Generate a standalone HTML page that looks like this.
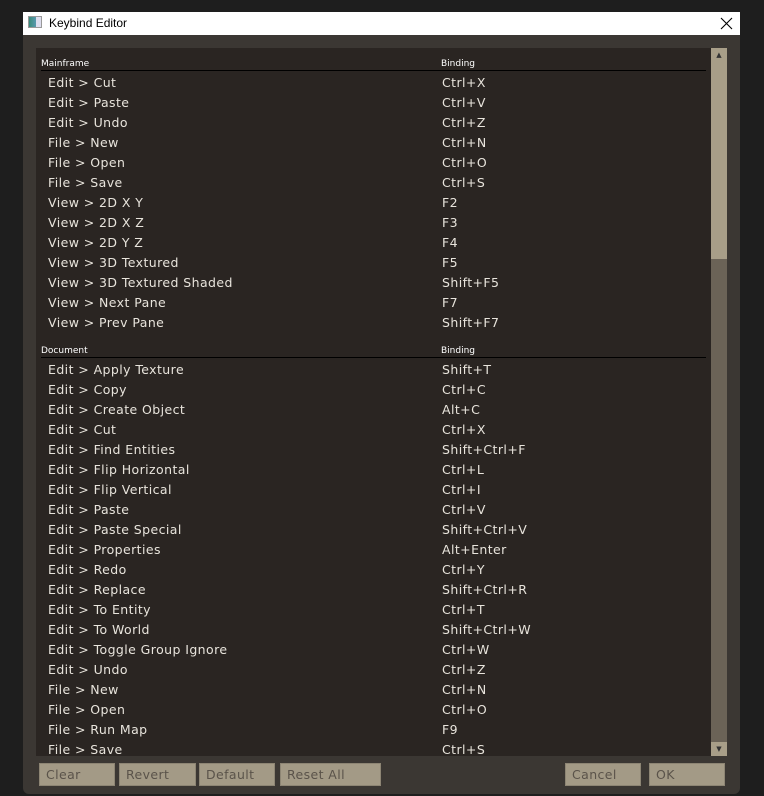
<!DOCTYPE html>
<html><head><style>
*{margin:0;padding:0;box-sizing:border-box}
body{width:764px;height:796px;background:#1e1e1e;position:relative;overflow:hidden;font-family:"DejaVu Sans","Liberation Sans",sans-serif}
.win{position:absolute;left:23px;top:12px;width:717px;height:782px;background:#3b3733;border-radius:0 0 6px 6px}
.title{position:absolute;left:0;top:0;width:717px;height:23px;background:#fff;font-family:"Liberation Sans",sans-serif;font-size:12px;color:#000}
.title span{position:absolute;left:26px;top:4px}
.ico{position:absolute;left:5px;top:4px;width:14px;height:12px;border:1px solid #999;background:linear-gradient(90deg,#3a8a7a 0,#5a9ab0 60%,#dde 60%)}
.x{position:absolute;right:7px;top:5px;width:13px;height:13px}
.panel{position:absolute;left:13px;top:36px;width:691px;height:708px;background:#2a2522;overflow:hidden}
.row{position:absolute;left:12px;height:20px;line-height:20px;font-size:12.5px;letter-spacing:0.42px;color:#e8e4dc;white-space:nowrap;margin-top:1px}
.b{position:absolute;left:394px}
.hdr{position:absolute;left:5px;width:665px;height:15px;font-size:9px;color:#fff;border-bottom:1px solid #000;line-height:13px;padding-top:2px}
.hdr .b{left:400px}
.sb{position:absolute;left:675px;top:0;width:16px;height:708px;background:#6b6357}
.th{position:absolute;left:0;top:14px;width:16px;height:197px;background:#a89e88}
.ar{position:absolute;left:0;width:16px;height:14px;background:#a89e88;font-size:7px;color:#333;text-align:center;line-height:14px}
.btn{position:absolute;top:751px;height:23px;background:#a39a86;border:1px solid #8d8574;color:#5a534a;font-size:12.5px;letter-spacing:0.4px;line-height:21px;padding-left:6px}
</style></head><body>
<div class="win">
<div class="title"><div class="ico"></div><span>Keybind Editor</span><svg class="x" viewBox="0 0 13 13"><path d="M1 1L12 12M12 1L1 12" stroke="#000" stroke-width="1.1"/></svg></div>
<div class="panel">
<div class="hdr" style="top:8px">Mainframe<span class="b">Binding</span></div>
<div class="row" style="top:24px">Edit &gt; Cut<span class="b">Ctrl+X</span></div>
<div class="row" style="top:44px">Edit &gt; Paste<span class="b">Ctrl+V</span></div>
<div class="row" style="top:64px">Edit &gt; Undo<span class="b">Ctrl+Z</span></div>
<div class="row" style="top:84px">File &gt; New<span class="b">Ctrl+N</span></div>
<div class="row" style="top:104px">File &gt; Open<span class="b">Ctrl+O</span></div>
<div class="row" style="top:124px">File &gt; Save<span class="b">Ctrl+S</span></div>
<div class="row" style="top:144px">View &gt; 2D X Y<span class="b">F2</span></div>
<div class="row" style="top:164px">View &gt; 2D X Z<span class="b">F3</span></div>
<div class="row" style="top:184px">View &gt; 2D Y Z<span class="b">F4</span></div>
<div class="row" style="top:204px">View &gt; 3D Textured<span class="b">F5</span></div>
<div class="row" style="top:224px">View &gt; 3D Textured Shaded<span class="b">Shift+F5</span></div>
<div class="row" style="top:244px">View &gt; Next Pane<span class="b">F7</span></div>
<div class="row" style="top:264px">View &gt; Prev Pane<span class="b">Shift+F7</span></div>
<div class="hdr" style="top:295px">Document<span class="b">Binding</span></div>
<div class="row" style="top:311px">Edit &gt; Apply Texture<span class="b">Shift+T</span></div>
<div class="row" style="top:331px">Edit &gt; Copy<span class="b">Ctrl+C</span></div>
<div class="row" style="top:351px">Edit &gt; Create Object<span class="b">Alt+C</span></div>
<div class="row" style="top:371px">Edit &gt; Cut<span class="b">Ctrl+X</span></div>
<div class="row" style="top:391px">Edit &gt; Find Entities<span class="b">Shift+Ctrl+F</span></div>
<div class="row" style="top:411px">Edit &gt; Flip Horizontal<span class="b">Ctrl+L</span></div>
<div class="row" style="top:431px">Edit &gt; Flip Vertical<span class="b">Ctrl+I</span></div>
<div class="row" style="top:451px">Edit &gt; Paste<span class="b">Ctrl+V</span></div>
<div class="row" style="top:471px">Edit &gt; Paste Special<span class="b">Shift+Ctrl+V</span></div>
<div class="row" style="top:491px">Edit &gt; Properties<span class="b">Alt+Enter</span></div>
<div class="row" style="top:511px">Edit &gt; Redo<span class="b">Ctrl+Y</span></div>
<div class="row" style="top:531px">Edit &gt; Replace<span class="b">Shift+Ctrl+R</span></div>
<div class="row" style="top:551px">Edit &gt; To Entity<span class="b">Ctrl+T</span></div>
<div class="row" style="top:571px">Edit &gt; To World<span class="b">Shift+Ctrl+W</span></div>
<div class="row" style="top:591px">Edit &gt; Toggle Group Ignore<span class="b">Ctrl+W</span></div>
<div class="row" style="top:611px">Edit &gt; Undo<span class="b">Ctrl+Z</span></div>
<div class="row" style="top:631px">File &gt; New<span class="b">Ctrl+N</span></div>
<div class="row" style="top:651px">File &gt; Open<span class="b">Ctrl+O</span></div>
<div class="row" style="top:671px">File &gt; Run Map<span class="b">F9</span></div>
<div class="row" style="top:691px">File &gt; Save<span class="b">Ctrl+S</span></div>
<div class="sb"><div class="ar" style="top:0">▲</div><div class="th"></div><div class="ar" style="top:694px">▼</div></div>
</div>
<div class="btn" style="left:16px;width:76px">Clear</div>
<div class="btn" style="left:96px;width:77px">Revert</div>
<div class="btn" style="left:176px;width:76px">Default</div>
<div class="btn" style="left:257px;width:101px">Reset All</div>
<div class="btn" style="left:542px;width:76px">Cancel</div>
<div class="btn" style="left:626px;width:76px">OK</div>
</div>
</body></html>
